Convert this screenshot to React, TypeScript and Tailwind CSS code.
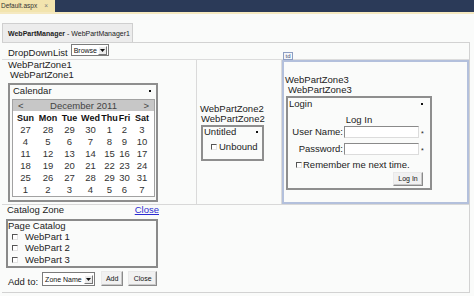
import React from "react"

const weeks = [
  ["27", "28", "29", "30", "1", "2", "3"],
  ["4", "5", "6", "7", "8", "9", "10"],
  ["11", "12", "13", "14", "15", "16", "17"],
  ["18", "19", "20", "21", "22", "23", "24"],
  ["25", "26", "27", "28", "29", "30", "31"],
  ["1", "2", "3", "4", "5", "6", "7"],
]
const days = ["Sun", "Mon", "Tue", "Wed", "Thu", "Fri", "Sat"]
const calCols = "grid grid-cols-[23px_22px_21px_21px_17px_13px_22px] pl-[1px]"

function Check() {
  return (
    <span className="inline-block w-[6px] h-[6px] bg-white border border-t-[#555] border-l-[#555] border-r-[#e4e4e4] border-b-[#e4e4e4]" />
  )
}

function DropArrow() {
  return (
    <span className="w-[9px] h-[9px] mr-[1px] flex items-center justify-center bg-[#ececec] border border-t-[#fff] border-l-[#fff] border-r-[#777] border-b-[#777]">
      <svg width="5" height="3" viewBox="0 0 5 3">
        <path d="M0 0h5L2.5 3z" fill="#111" />
      </svg>
    </span>
  )
}

function Select({ label, className }: { label: string; className: string }) {
  return (
    <div className={`flex items-center bg-white border border-[#7b7b7b] ${className}`}>
      <span className="flex-1 pl-[2px] text-[7px] leading-none text-[#111]">{label}</span>
      <DropArrow />
    </div>
  )
}

function Button({ label, className }: { label: string; className: string }) {
  return (
    <div
      className={`flex items-center justify-center bg-[#f1f1f1] border border-t-[#e9e9e9] border-l-[#e9e9e9] border-r-[#8a8a8a] border-b-[#8a8a8a] shadow-[inset_-1px_-1px_0_#c8c8c8] text-[7px] leading-none text-[#111] ${className}`}
    >
      {label}
    </div>
  )
}

function PartTitle({ title }: { title: string }) {
  return (
    <div className="flex items-center justify-between">
      <span>{title}</span>
      <span className="w-[2px] h-[2px] bg-[#111]" />
    </div>
  )
}

export default function App() {
  return (
    <div className="relative w-[474px] h-[296px] overflow-hidden bg-[#fafbfa] font-['Liberation_Sans',Arial,sans-serif] text-[9.5px] leading-[10px] text-[#222]">
      {/* document tab strip */}
      <div className="h-[12px] bg-[#2b3a58] flex">
        <div className="w-[55px] bg-[#f2e4ae] flex items-center pl-[1px] gap-[7px] text-[6.5px] leading-none text-[#333]">
          <span>Default.aspx</span>
          <span className="text-[#777]">×</span>
        </div>
      </div>
      <div className="h-[2px] bg-[#f5e9c0]" />

      {/* WebPartManager */}
      <div className="ml-[2px] mt-[9px] w-[131px] h-[19px] flex items-center pl-[5px] bg-[#ececec] border border-b-0 border-[#cfcfcf] text-[7px] leading-none text-[#222]">
        <span className="font-bold">WebPartManager</span>
        <span>&nbsp;- WebPartManager1</span>
      </div>

      {/* layout table */}
      <div className="relative ml-[2px] w-[468px] border border-l-0 border-[#d2d2d2]">
        <div className="h-[17px] flex items-start pl-[6px] border-b border-[#dcdcdc]">
          <span className="mt-[5px]">DropDownList</span>
          <Select label="Browse" className="ml-[3px] mt-[1px] w-[38px] h-[12px]" />
        </div>

        <div className="h-[145px] grid grid-cols-[195px_85px_1fr] border-b border-[#d8d8d8]">
          {/* zone 1 */}
          <div className="border-r border-[#dadada]">
            <div className="pl-[6px]">WebPartZone1</div>
            <div className="pl-[8px]">WebPartZone1</div>
            <div className="ml-[6px] mt-[3px] w-[150px] h-[119px] border-2 border-[#8e8e8e] px-[2px]">
              <div className="h-[14px] pt-[1px] pl-[1px] pr-[3px]">
                <PartTitle title="Calendar" />
              </div>
              <div className="w-[143px] border border-[#a2a2a2] bg-white text-[#333]">
                <div className="h-[11px] flex items-center justify-between px-[5px] bg-[#c7c7c7] text-[#444]">
                  <span>&lt;</span>
                  <span>December 2011</span>
                  <span>&gt;</span>
                </div>
                <div className={`${calCols} h-[13px] items-center font-bold text-[9px] text-[#111]`}>
                  {days.map((d) => (
                    <span key={d} className="text-center">{d}</span>
                  ))}
                </div>
                {weeks.map((w, i) => (
                  <div key={i} className={`${calCols} h-[12px] items-center`}>
                    {w.map((n, j) => (
                      <span key={j} className="text-center">{n}</span>
                    ))}
                  </div>
                ))}
              </div>
            </div>
          </div>

          {/* zone 2 */}
          <div className="border-r border-[#dadada] flex flex-col justify-center pl-[3px]">
            <div>WebPartZone2</div>
            <div className="pl-[1px]">WebPartZone2</div>
            <div className="ml-[1px] mt-[1px] w-[63px] h-[36px] border-2 border-[#8e8e8e] pl-[1px] pr-[4px]">
              <PartTitle title="Untitled" />
              <div className="mt-[5px] flex items-center pl-[7px] gap-[2px]">
                <Check />
                <span>Unbound</span>
              </div>
            </div>
          </div>

          {/* zone 3 */}
          <div className="border-2 border-[#b3c0dc] flex flex-col justify-center">
            <div className="pl-[1px]">WebPartZone3</div>
            <div className="pl-[4px]">WebPartZone3</div>
            <div className="ml-[2px] mt-[1px] w-[146px] h-[94px] border-2 border-[#8e8e8e] pt-[1px] pl-[1px] pr-[7px]">
              <PartTitle title="Login" />
              <div className="mt-[6px] text-center pl-[6px]">Log In</div>
              <div className="grid grid-cols-[55px_75px_1fr] gap-y-[3px] items-center">
                <span className="text-right pr-[1px]">User Name:</span>
                <div className="h-[12px] bg-white border border-t-[#8a8a8a] border-l-[#8a8a8a] border-r-[#dcdcdc] border-b-[#dcdcdc]" />
                <span className="pl-[2px] pt-[4px] text-[7px]">*</span>
                <span className="text-right pr-[1px]">Password:</span>
                <div className="h-[12px] bg-white border border-t-[#8a8a8a] border-l-[#8a8a8a] border-r-[#dcdcdc] border-b-[#dcdcdc]" />
                <span className="pl-[2px] pt-[4px] text-[7px]">*</span>
              </div>
              <div className="mt-[4px] flex items-center pl-[7px] gap-[1px]">
                <Check />
                <span>Remember me next time.</span>
              </div>
              <div className="flex justify-end mt-[2px]">
                <Button label="Log In" className="w-[30px] h-[14px]" />
              </div>
            </div>
          </div>

          {/* tag over the selected cell */}
          <div className="absolute left-[281px] top-[9px] w-[10px] h-[8px] bg-[#f4f6fb] border border-[#8e9ec2] text-[6px] leading-[6px] text-[#44557a] text-center">
            td
          </div>
        </div>

        {/* catalog zone */}
        <div className="h-[87px] pl-[4px]">
          <div className="w-[154px]">
            <div className="flex justify-between pl-[1px] pr-[1px]">
              <span>Catalog Zone</span>
              <span className="text-[#2b2bd0] underline">Close</span>
            </div>
            <div className="mt-[4px] w-[152px] h-[49px] border-2 border-[#8a8a8a]">
              <div>Page Catalog</div>
              {["WebPart 1", "WebPart 2", "WebPart 3"].map((p) => (
                <div key={p} className="h-[11.5px] flex items-center pl-[4px] gap-[7px]">
                  <Check />
                  <span>{p}</span>
                </div>
              ))}
            </div>
            <div className="mt-[3px] flex items-end pl-[2px]">
              <span className="mr-[4px] translate-y-[1px]">Add to:</span>
              <Select label="Zone Name" className="w-[53px] h-[14px]" />
              <Button label="Add" className="ml-[6px] w-[22px] h-[15px]" />
              <Button label="Close" className="ml-[5px] w-[29px] h-[15px]" />
            </div>
          </div>
        </div>
      </div>
    </div>
  )
}
